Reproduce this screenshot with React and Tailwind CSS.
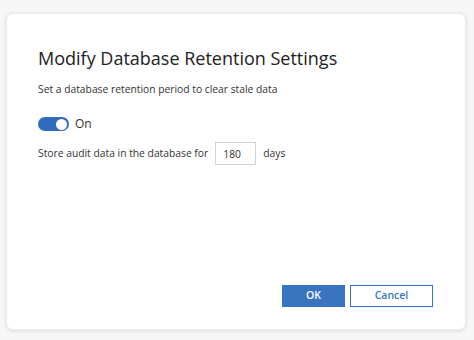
import React from "react";

export default function App() {
  const [on, setOn] = React.useState(true);
  const [days, setDays] = React.useState("180");

  return (
    <div
      className="w-[474px] h-[340px] bg-[#f7f7f7] pt-[13px] pl-[6px]"
      style={{ fontFamily: '"Open Sans", "Liberation Sans", sans-serif' }}
    >
      <div className="w-[460px] h-[317px] bg-white rounded-[7px] shadow-[0_1px_4px_rgba(0,0,0,0.12)] border border-[#ececec] flex flex-col px-[31px]">
        <h1 className="mt-[31px] text-[18px] leading-[26px] text-[#222]">
          Modify Database Retention Settings
        </h1>
        <p className="mt-[10px] text-[10.3px] leading-[16px] text-[#333]">
          Set a database retention period to clear stale data
        </p>

        <div className="mt-[18px] flex items-center gap-[6px]">
          <button
            onClick={() => setOn((v) => !v)}
            className={`w-[31px] h-[14px] rounded-full flex items-center px-[2px] ${
              on ? "bg-[#2f6cbd] justify-end" : "bg-[#bbb] justify-start"
            }`}
          >
            <span className="w-[11px] h-[11px] rounded-full bg-white" />
          </button>
          <span className="text-[12px] text-[#333]">{on ? "On" : "Off"}</span>
        </div>

        <div className="mt-[9px] flex items-center text-[10.3px] text-[#333]">
          <span>Store audit data in the database for</span>
          <input
            value={days}
            onChange={(e) => setDays(e.target.value)}
            className="ml-[7px] w-[41px] h-[23px] border border-[#d4d4d4] px-[7px] text-[10.3px] text-[#333] outline-none"
          />
          <span className="ml-[7px]">days</span>
        </div>

        <div className="mt-auto mb-[22px] flex justify-end gap-[5px] pr-[1px]">
          <button className="w-[63px] h-[22px] bg-[#3a73c0] text-white text-[10.5px] font-semibold">
            OK
          </button>
          <button className="w-[83px] h-[22px] border border-[#3a73c0] bg-white text-[#3a73c0] text-[10.5px] font-semibold">
            Cancel
          </button>
        </div>
      </div>
    </div>
  );
}
